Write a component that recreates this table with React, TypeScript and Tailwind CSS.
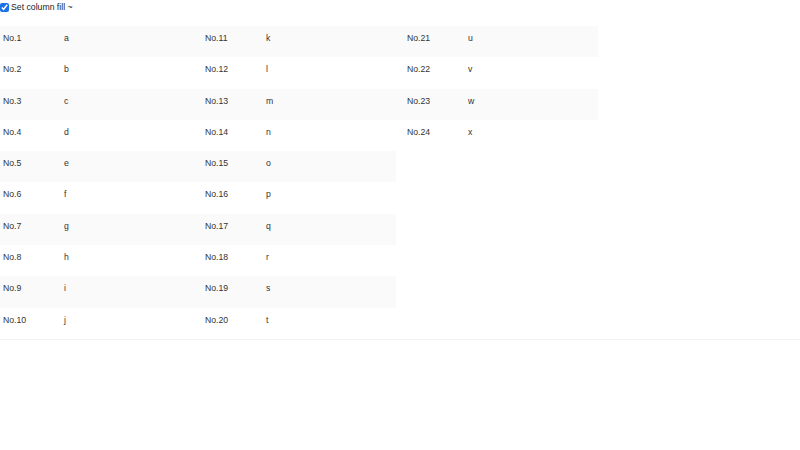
import React from "react";

const letters = "abcdefghijklmnopqrstuvwx".split("");

export default function App() {
  const cols = [
    { items: letters.slice(0, 10), w: "w-[202px]", pad: "pl-[3px]", first: "w-[64px]" },
    { items: letters.slice(10, 20), w: "w-[194px]", pad: "pl-[3px]", first: "w-[64px]" },
    { items: letters.slice(20, 24), w: "w-[202px]", pad: "pl-[11px]", first: "w-[72px]" },
  ];
  return (
    <div className="w-[800px] h-[450px] bg-white text-[#333]" style={{ fontFamily: '"Liberation Sans", Arial, sans-serif' }}>
      <div className="h-[26px] flex items-start pt-[2px]">
        <label className="flex items-center gap-[2px] text-[8.7px] leading-[10px] text-[#222]">
          <input type="checkbox" defaultChecked className="m-0 w-[9px] h-[9px] accent-[#1a73e8]" />
          <span>Set column fill ~</span>
        </label>
      </div>
      <div className="flex h-[314px] border-b border-[#f2f2f2]">
        {cols.map((col, ci) => (
          <div key={ci} className={`${col.w} flex flex-col`}>
            {col.items.map((l, ri) => {
              const n = ci * 10 + ri + 1;
              return (
                <div
                  key={l}
                  className={`h-[31.3px] shrink-0 flex items-start pt-[7px] text-[8.7px] leading-[10px] ${ri % 2 === 0 ? "bg-[#fafafa]" : "bg-white"}`}
                >
                  <span className={`${col.first} ${col.pad} shrink-0`}>No.{n}</span>
                  <span className="text-[#333]">{l}</span>
                </div>
              );
            })}
          </div>
        ))}
      </div>
    </div>
  );
}
